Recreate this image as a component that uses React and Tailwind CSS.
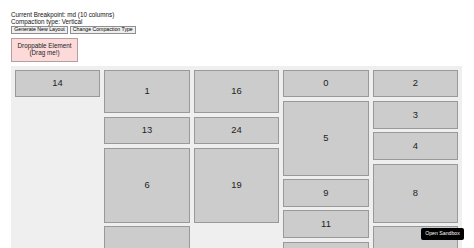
const items = [
  { id: "14", col: "col-start-1", row: "row-start-1 row-span-2" },
  { id: "1", col: "col-start-2", row: "row-start-1 row-span-3" },
  { id: "13", col: "col-start-2", row: "row-start-4 row-span-2" },
  { id: "6", col: "col-start-2", row: "row-start-6 row-span-5" },
  { id: "", col: "col-start-2", row: "row-start-11 row-span-4" },
  { id: "16", col: "col-start-3", row: "row-start-1 row-span-3" },
  { id: "24", col: "col-start-3", row: "row-start-4 row-span-2" },
  { id: "19", col: "col-start-3", row: "row-start-6 row-span-5" },
  { id: "0", col: "col-start-4", row: "row-start-1 row-span-2" },
  { id: "5", col: "col-start-4", row: "row-start-3 row-span-5" },
  { id: "9", col: "col-start-4", row: "row-start-8 row-span-2" },
  { id: "11", col: "col-start-4", row: "row-start-10 row-span-2" },
  { id: "", col: "col-start-4", row: "row-start-12 row-span-3" },
  { id: "2", col: "col-start-5", row: "row-start-1 row-span-2" },
  { id: "3", col: "col-start-5", row: "row-start-3 row-span-2" },
  { id: "4", col: "col-start-5", row: "row-start-5 row-span-2" },
  { id: "8", col: "col-start-5", row: "row-start-7 row-span-4" },
  { id: "", col: "col-start-5", row: "row-start-11 row-span-4" },
];

export default function App() {
  return (
    <div
      className="relative h-[248px] overflow-hidden bg-white pt-[11px] px-[11px] text-[#111]"
      style={{ fontFamily: '"Liberation Sans", Arial, sans-serif' }}
    >
      <div className="text-[6.3px] leading-[7.3px]">
        <div>Current Breakpoint: md (10 columns)</div>
        <div>Compaction type: Vertical</div>
      </div>
      <div className="mt-[0.5px] flex gap-[1.5px]">
        <button className="h-[7.5px] border border-[#8f8f8f] bg-[#efefef] px-[2.3px] text-[5.2px] leading-[5px] text-black">
          Generate New Layout
        </button>
        <button className="h-[7.5px] border border-[#8f8f8f] bg-[#efefef] px-[2.3px] text-[5.2px] leading-[5px] text-black">
          Change Compaction Type
        </button>
      </div>
      <div className="mt-[4.5px] flex h-[23.5px] w-[67px] flex-col items-center justify-center border border-[#b79d9d] bg-[#fddada] text-[6.3px] leading-[6.5px] text-[#222]">
        <div>Droppable Element</div>
        <div>(Drag me!)</div>
      </div>
      <div className="mt-[4.5px] w-[451px] bg-[#efefef] p-[3.6px]">
        <div className="grid grid-cols-5 auto-rows-[12.05px] gap-[3.6px]">
          {items.map((it, i) => (
            <div
              key={i}
              className={`${it.col} ${it.row} flex items-center justify-center border border-[#999] bg-[#ccc] text-[9.4px] text-[#222]`}
            >
              {it.id}
            </div>
          ))}
        </div>
      </div>
      <div className="absolute right-[10px] top-[228px] flex h-[12px] w-[43px] items-center justify-center rounded-[2px] bg-black text-[5.2px] text-white">
        Open Sandbox
      </div>
    </div>
  );
}
